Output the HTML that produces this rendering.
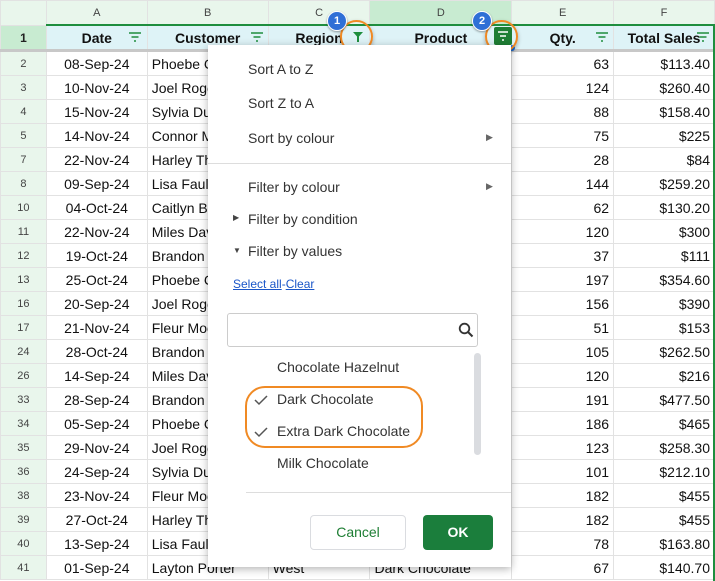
<!DOCTYPE html>
<html><head><style>
body{margin:0;width:715px;height:581px;overflow:hidden;font-family:"Liberation Sans",Arial,sans-serif;background:#fff;position:relative}
.abs{position:absolute}
table{border-collapse:collapse;position:absolute;left:0;top:0;table-layout:fixed}
td{border:1px solid #e2e2e2;height:23px;padding:0 4px;font-size:14px;color:#111;white-space:nowrap;overflow:hidden}
.rh{background:#e9f6ec;text-align:center;font-size:11px;color:#444;padding:0}
.ch td{background:#e9f6ec;text-align:center;font-size:11px;color:#444;height:24px}
.h1 td{background:#def3f7;font-weight:bold;font-size:14px;text-align:center;height:23px;border-bottom:3px solid #c8c8c8;position:relative}
.r{text-align:right}
.menu{left:208px;top:45px;width:303px;height:522px;background:#fff;box-shadow:0 2px 8px rgba(0,0,0,.3);font-size:14px;color:#333}
.menu > *{position:absolute}
</style></head><body>
<table>
<colgroup><col style="width:46px"><col style="width:101px"><col style="width:121px"><col style="width:102px"><col style="width:142px"><col style="width:102px"><col style="width:101px"></colgroup>
<tr class="ch"><td></td><td>A</td><td>B</td><td>C</td><td style="background:#c8ebd1">D</td><td>E</td><td>F</td></tr>
<tr class="h1"><td class="rh" style="background:#c8ebd1;font-weight:bold;color:#222;font-size:12px">1</td><td>Date</td><td>Customer</td><td>Region</td><td>Product</td><td>Qty.</td><td>Total Sales</td></tr>
<tbody id="b"></tbody>
</table>
<script>
var d=[[2,"08-Sep-24","Phoebe Carter",63,"$113.40"],[3,"10-Nov-24","Joel Rogers",124,"$260.40"],[4,"15-Nov-24","Sylvia Dunn",88,"$158.40"],[5,"14-Nov-24","Connor Mills",75,"$225"],[7,"22-Nov-24","Harley Thorn",28,"$84"],[8,"09-Sep-24","Lisa Faulkner",144,"$259.20"],[10,"04-Oct-24","Caitlyn Brooks",62,"$130.20"],[11,"22-Nov-24","Miles Davis",120,"$300"],[12,"19-Oct-24","Brandon Lee",37,"$111"],[13,"25-Oct-24","Phoebe Carter",197,"$354.60"],[16,"20-Sep-24","Joel Rogers",156,"$390"],[17,"21-Nov-24","Fleur Moore",51,"$153"],[24,"28-Oct-24","Brandon Lee",105,"$262.50"],[26,"14-Sep-24","Miles Davis",120,"$216"],[33,"28-Sep-24","Brandon Lee",191,"$477.50"],[34,"05-Sep-24","Phoebe Carter",186,"$465"],[35,"29-Nov-24","Joel Rogers",123,"$258.30"],[36,"24-Sep-24","Sylvia Dunn",101,"$212.10"],[38,"23-Nov-24","Fleur Moore",182,"$455"],[39,"27-Oct-24","Harley Thorn",182,"$455"],[40,"13-Sep-24","Lisa Faulkner",78,"$163.80"],[41,"01-Sep-24","Layton Porter",67,"$140.70"]];
var h="";d.forEach(function(r){h+='<tr><td class="rh">'+r[0]+'</td><td style="text-align:center">'+r[1]+'</td><td>'+r[2]+'</td><td>West</td><td>Dark Chocolate</td><td class="r">'+r[3]+'</td><td class="r">'+r[4]+'</td></tr>'});
document.getElementById("b").innerHTML=h;
</script>
<div class="abs" style="left:713px;top:25px;width:2px;height:556px;background:#1e8e3e"></div>
<div class="abs" style="left:46px;top:24px;width:669px;height:2px;background:#1e8e3e"></div>
<svg class="abs" style="left:128px;top:31px" width="14" height="12"><path d="M1 2h12M3.5 6h7M6 10h2" stroke="#1e8e3e" stroke-width="1.6"/></svg>
<svg class="abs" style="left:250px;top:31px" width="14" height="12"><path d="M1 2h12M3.5 6h7M6 10h2" stroke="#1e8e3e" stroke-width="1.6"/></svg>
<svg class="abs" style="left:595px;top:31px" width="14" height="12"><path d="M1 2h12M3.5 6h7M6 10h2" stroke="#1e8e3e" stroke-width="1.6"/></svg>
<svg class="abs" style="left:696px;top:31px" width="14" height="12"><path d="M1 2h12M3.5 6h7M6 10h2" stroke="#1e8e3e" stroke-width="1.6"/></svg>
<svg class="abs" style="left:352px;top:31px" width="12" height="12"><path d="M1 1h10L7 5.5V11H5V5.5Z" fill="#1e8e3e"/></svg>
<div class="abs" style="left:494px;top:27px;width:18px;height:18px;background:#1e7e34;border-radius:2px"></div>
<svg class="abs" style="left:496px;top:30px" width="14" height="12"><path d="M2 2h10M4 6h6M6 10h2" stroke="#fff" stroke-width="1.6"/></svg>
<div class="abs" style="left:509px;top:45px;width:6px;height:6px;border-radius:50%;background:#1a73e8"></div>
<div class="abs" style="left:340px;top:20px;width:33px;height:33px;border:2px solid #f08a24;border-radius:50%;box-sizing:border-box;box-shadow:0 2px 4px rgba(0,0,0,.3)"></div>
<div class="abs" style="left:485px;top:20px;width:33px;height:33px;border:2px solid #f08a24;border-radius:50%;box-sizing:border-box;box-shadow:0 2px 4px rgba(0,0,0,.3)"></div>
<div class="abs" style="left:327px;top:11px;width:18px;height:18px;border-radius:50%;background:#2f6fd6;border:1px solid #fff;color:#fff;font-size:11px;font-weight:bold;text-align:center;line-height:18px;box-shadow:0 1px 2px rgba(0,0,0,.4)">1</div>
<div class="abs" style="left:472px;top:11px;width:18px;height:18px;border-radius:50%;background:#2f6fd6;border:1px solid #fff;color:#fff;font-size:11px;font-weight:bold;text-align:center;line-height:18px;box-shadow:0 1px 2px rgba(0,0,0,.4)">2</div>
<div class="abs menu">
<div style="left:40px;top:16px">Sort A to Z</div>
<div style="left:40px;top:50px">Sort Z to A</div>
<div style="left:40px;top:85px">Sort by colour</div>
<div style="left:278px;top:87px;font-size:9px;color:#666">&#9654;</div>
<div style="left:0;top:118px;width:303px;height:1px;background:#ddd"></div>
<div style="left:40px;top:134px">Filter by colour</div>
<div style="left:278px;top:136px;font-size:9px;color:#666">&#9654;</div>
<div style="left:25px;top:168px;font-size:8px;color:#444">&#9654;</div>
<div style="left:40px;top:166px">Filter by condition</div>
<div style="left:25px;top:201px;font-size:8px;color:#444">&#9660;</div>
<div style="left:40px;top:198px">Filter by values</div>
<div style="left:25px;top:232px;font-size:12px;color:#1a56c8"><u>Select all</u>-<u>Clear</u></div>
<div style="left:19px;top:268px;width:251px;height:34px;border:1px solid #ccc;border-radius:3px;box-sizing:border-box"></div>
<svg style="left:250px;top:277px" width="16" height="16"><circle cx="6.5" cy="6.5" r="4.8" fill="none" stroke="#333" stroke-width="1.8"/><path d="M10 10l4.5 4.5" stroke="#333" stroke-width="2"/></svg>
<div style="left:69px;top:314px">Chocolate Hazelnut</div>
<div style="left:69px;top:346px">Dark Chocolate</div>
<div style="left:69px;top:378px">Extra Dark Chocolate</div>
<div style="left:69px;top:410px">Milk Chocolate</div>
<svg style="left:45px;top:347px" width="16" height="48"><path d="M2 8l4 4 8-8M2 40l4 4 8-8" fill="none" stroke="#555" stroke-width="1.5"/></svg>
<div style="left:37px;top:341px;width:178px;height:62px;border:2px solid #f08a24;border-radius:20px;box-sizing:border-box"></div>
<div style="left:266px;top:308px;width:7px;height:102px;background:#dadce0;border-radius:4px"></div>
<div style="left:38px;top:447px;width:265px;height:1px;background:#ddd"></div>
<div style="left:102px;top:470px;width:96px;height:35px;border:1px solid #dadce0;border-radius:4px;box-sizing:border-box;color:#1e7e34;font-size:14px;text-align:center;line-height:33px">Cancel</div>
<div style="left:215px;top:470px;width:70px;height:35px;background:#1b7e3c;border-radius:4px;color:#fff;font-weight:bold;font-size:14px;text-align:center;line-height:35px">OK</div>
</div>
</body></html>
